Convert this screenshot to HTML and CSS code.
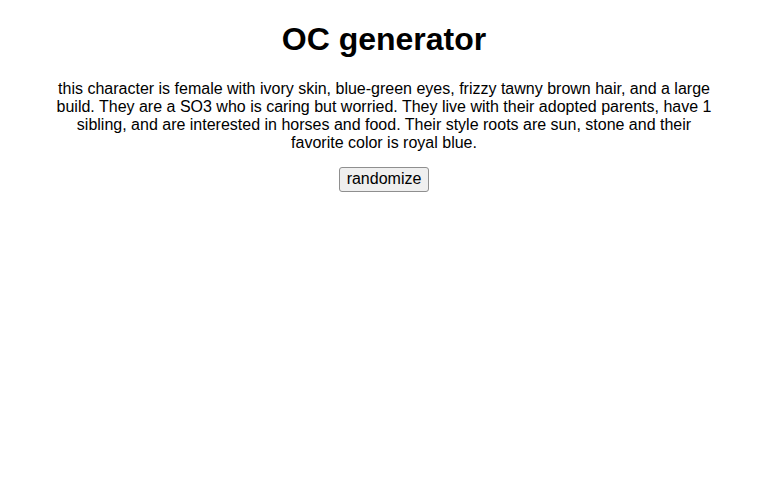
FILE: index.html
```html
<!DOCTYPE html>
<html lang="en">
<head>
<meta charset="utf-8">
<title>OC generator</title>
<link rel="stylesheet" href="styles.css">
</head>
<body>
<main class="page">
  <h1 class="title">OC generator</h1>
  <p class="description">this character is female with ivory skin, blue-green eyes, frizzy tawny brown hair, and a large build. They are a SO3 who is caring but worried. They live with their adopted parents, have 1 sibling, and are interested in horses and food. Their style roots are sun, stone and their favorite color is royal blue.</p>
  <button class="randomize" type="button">randomize</button>
</main>
</body>
</html>
```

FILE: styles.css
```css
html, body {
  margin: 0;
  background: #fff;
  color: #000;
  font-family: "Liberation Sans", Arial, sans-serif;
}

.page {
  text-align: center;
  padding: 0 52px;
}

.title {
  font-size: 32px;
  font-weight: bold;
  margin: 21.44px 0;
}

.description {
  font-size: 16px;
  line-height: 18px;
  margin: 16px 0 15px;
}

.randomize {
  font-family: "Liberation Sans", Arial, sans-serif;
  font-size: 16px;
  line-height: 18px;
  color: #000;
  background: #efefef;
  border: 1px solid #8f8f8f;
  border-radius: 3px;
  padding: 2.5px 7px;
}
```
